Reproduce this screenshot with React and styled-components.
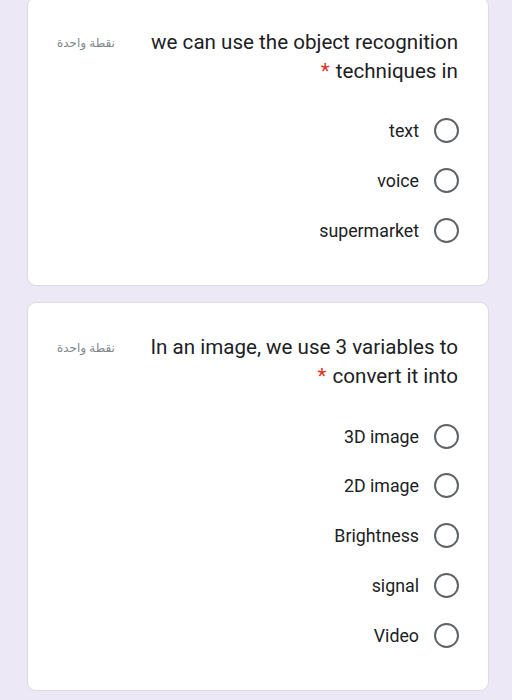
import React from "react";
import styled, { createGlobalStyle } from "styled-components";

const Global = createGlobalStyle`
  html, body { margin: 0; padding: 0; background: #ece8f6; }
  body { font-family: Roboto, "Noto Sans", sans-serif; }
`;

const Page = styled.div`
  display: flex;
  flex-direction: column;
  gap: 16px;
  padding: 0 23px 0 27px;
  margin-top: -3px;
`;

const Card = styled.section`
  background: #fff;
  border: 1px solid #dadce0;
  border-radius: 9px;
  padding: 30px 30px 30px 29px;
`;

const Header = styled.div`
  display: flex;
  justify-content: space-between;
  align-items: flex-start;
  margin-bottom: 20px;
`;

const Points = styled.div`
  font-family: "Noto Sans", "DejaVu Sans", sans-serif;
  font-size: 12px;
  color: #80868b;
  line-height: 29px;
  direction: rtl;
`;

const Title = styled.div`
  font-size: 20.6px;
  line-height: 29px;
  color: #202124;
  text-align: right;
`;

const Asterisk = styled.span`
  color: #d93025;
  margin-right: 6px;
`;

const Options = styled.div`
  display: flex;
  flex-direction: column;
`;

const Option = styled.label`
  height: 49.75px;
  display: flex;
  justify-content: flex-end;
  align-items: center;
  gap: 15px;
  font-size: 17.8px;
  color: #202124;
`;

const Radio = styled.span`
  width: 21px;
  height: 21px;
  border: 2px solid #5f6368;
  border-radius: 50%;
  margin-right: -1px;
`;

const questions = [
  {
    lines: ["we can use the object recognition", "techniques in"],
    options: ["text", "voice", "supermarket"],
  },
  {
    lines: ["In an image, we use 3 variables to", "convert it into"],
    options: ["3D image", "2D image", "Brightness", "signal", "Video"],
  },
];

export default function App() {
  return (
    <>
      <Global />
      <Page>
        {questions.map((q, i) => (
          <Card key={i}>
            <Header>
              <Points>نقطة واحدة</Points>
              <Title>
                {q.lines[0]}
                <br />
                <Asterisk>*</Asterisk>
                {q.lines[1]}
              </Title>
            </Header>
            <Options>
              {q.options.map((o) => (
                <Option key={o}>
                  {o}
                  <Radio />
                </Option>
              ))}
            </Options>
          </Card>
        ))}
      </Page>
    </>
  );
}
